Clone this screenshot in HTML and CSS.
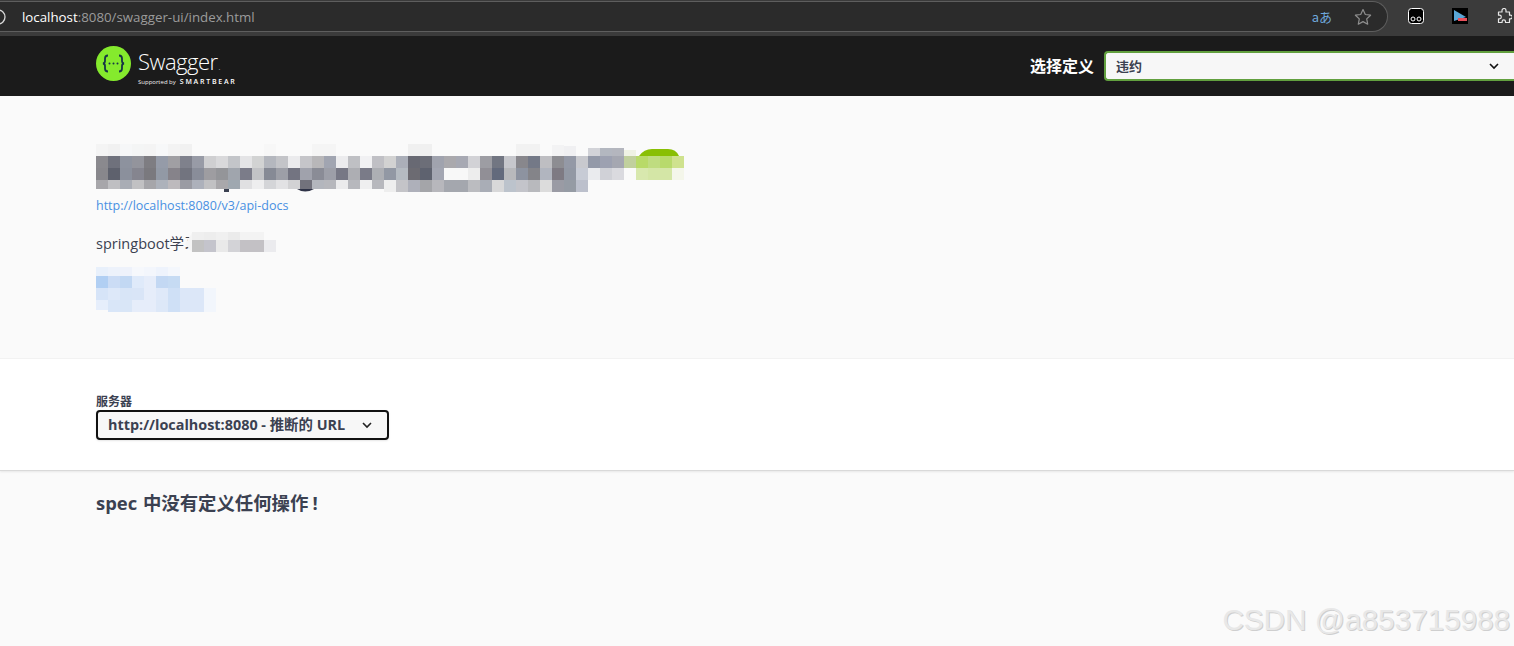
FILE: index.html
```html
<!DOCTYPE html>
<html lang="zh-CN">
<head>
<meta charset="utf-8">
<title>Swagger UI</title>
<link rel="stylesheet" href="styles.css">
</head>
<body>
<div class="browser">
  <div class="address">
    <svg class="reload" width="8" height="18" viewBox="0 0 8 18"><circle cx="-1" cy="9" r="7" fill="none" stroke="#d8d8d8" stroke-width="1.3"/></svg>
    <span class="host">localhost</span><span class="path">:8080/swagger-ui/index.html</span>
    <span class="spacer"></span>
    <span class="translate">aあ</span>
    <svg class="star" width="18" height="18" viewBox="0 0 18 18"><path d="M9 1.6l2.3 4.9 5.3.7-3.9 3.7 1 5.3L9 13.6l-4.7 2.6 1-5.3-3.9-3.700 5.3-.7z" fill="none" stroke="#8f8f8f" stroke-width="1.2" stroke-linejoin="round"/></svg>
  </div>
  <div class="exts">
    <svg width="16" height="16" viewBox="0 0 16 16"><rect x=".5" y=".5" width="15" height="15" rx="3" fill="#000" stroke="#fff"/><circle cx="5" cy="11" r="2" fill="#000" stroke="#fff"/><circle cx="11" cy="11" r="2" fill="#000" stroke="#fff"/></svg>
    <svg width="16" height="16" viewBox="0 0 16 16"><rect width="16" height="16" fill="#000"/><path d="M2 2l12 7-12 4z" fill="#5aa6d6"/><rect x="6" y="10" width="9" height="3" fill="#e8505b"/></svg>
    <svg width="16" height="16" viewBox="0 0 16 16"><path d="M6 2.500a2 2 0 0 1 4 0V4h3.500v3.200h1a1.800 1.800 0 0 1 0 3.600h-1V14.500H9.500v-1a1.700 1.700 0 0 0-3.400 0v1H2.500v-3.700h1a1.800 1.800 0 0 0 0-3.600h-1V4H6z" fill="none" stroke="#e6e6e6" stroke-width="1.2" stroke-linejoin="round"/></svg>
  </div>
</div>

<header class="topbar">
  <div class="logo">
    <svg class="logo-mark" width="35" height="35" viewBox="0 0 35 35">
      <circle cx="17.5" cy="17.5" r="17.5" fill="#85ea2d"/>
      <path d="M12 9.5c-2.6 0-3 1.2-3 3v2.6c0 1.3-.7 2.2-2 2.4 1.3.2 2 1.100 2 2.400v2.600c0 1.800.4 3 3 3M23 9.500c2.600 0 3 1.200 3 3v2.600c0 1.300.7 2.200 2 2.400-1.300.2-2 1.100-2 2.400v2.600c0 1.800-.4 3-3 3" fill="none" stroke="#173646" stroke-width="1.800"/>
      <circle cx="13.500" cy="17.500" r="1" fill="#173646"/><circle cx="17.500" cy="17.500" r="1" fill="#173646"/><circle cx="21.500" cy="17.500" r="1" fill="#173646"/>
    </svg>
    <div class="logo-text">
      <div class="logo-name">Swagger<span class="tm">.</span></div>
      <div class="logo-sub"><span class="by">Supported by</span><span class="bear">SMARTBEAR</span></div>
    </div>
  </div>
  <div class="definition">
    <label class="def-label">选择定义</label>
    <div class="def-select"><span class="def-value">违约</span>
      <svg class="chev" width="10" height="7" viewBox="0 0 10 7"><path d="M1 1l4 4 4-4" fill="none" stroke="#111" stroke-width="1.600"/></svg>
    </div>
  </div>
</header>

<section class="info">
  <svg class="mosaic-title" width="588" height="48" viewBox="0 0 588 48" shape-rendering="crispEdges">
    <g><rect x="0" y="0" width="12" height="12" fill="#f4f4f4"/><rect x="12" y="0" width="12" height="12" fill="#f1f1f1"/><rect x="24" y="0" width="12" height="12" fill="#f6f7f8"/><rect x="36" y="0" width="12" height="12" fill="#f4f5f5"/><rect x="48" y="0" width="12" height="12" fill="#f4f4f4"/><rect x="60" y="0" width="12" height="12" fill="#f7f8f9"/><rect x="72" y="0" width="12" height="12" fill="#f3f3f3"/><rect x="84" y="0" width="12" height="12" fill="#f1f1f1"/><rect x="168" y="0" width="12" height="12" fill="#f7f7f7"/><rect x="216" y="0" width="24" height="12" fill="#f5f5f5"/><rect x="312" y="0" width="24" height="12" fill="#f0f0f0"/><rect x="420" y="0" width="24" height="12" fill="#f2f2f2"/><rect x="456" y="1" width="12" height="11" fill="#f3f3f4"/><rect x="468" y="2" width="12" height="10" fill="#f0f0f2"/><rect x="492" y="4" width="12" height="8" fill="#d2d3d8"/><rect x="504" y="4" width="12" height="8" fill="#b3b7c0"/><rect x="516" y="4" width="12" height="8" fill="#b4b6be"/><rect x="528" y="6" width="12" height="6" fill="#eff2e4"/></g>
    <g><rect x="0" y="12" width="12" height="12" fill="#8a898e"/><rect x="12" y="12" width="12" height="12" fill="#6f717c"/><rect x="24" y="12" width="12" height="12" fill="#8d929e"/><rect x="36" y="12" width="12" height="12" fill="#93949c"/><rect x="48" y="12" width="12" height="12" fill="#7e7d82"/><rect x="60" y="12" width="12" height="12" fill="#959ba8"/><rect x="72" y="12" width="12" height="12" fill="#a09fa3"/><rect x="84" y="12" width="12" height="12" fill="#7f818c"/><rect x="96" y="12" width="12" height="12" fill="#989ba6"/><rect x="108" y="12" width="12" height="12" fill="#cfcfd1"/><rect x="120" y="12" width="12" height="12" fill="#d9d9db"/><rect x="132" y="12" width="12" height="12" fill="#c3c5c9"/><rect x="144" y="12" width="12" height="12" fill="#e4e4e6"/><rect x="156" y="12" width="12" height="12" fill="#d2d3d3"/><rect x="168" y="12" width="12" height="12" fill="#b4b7be"/><rect x="180" y="12" width="12" height="12" fill="#c3c4c8"/><rect x="192" y="12" width="12" height="12" fill="#ebebed"/><rect x="204" y="12" width="12" height="12" fill="#c5c5c9"/><rect x="216" y="12" width="12" height="12" fill="#b8b7b9"/><rect x="228" y="12" width="12" height="12" fill="#a1a5b1"/><rect x="240" y="12" width="12" height="12" fill="#ececee"/><rect x="252" y="12" width="12" height="12" fill="#bfc0c4"/><rect x="264" y="12" width="12" height="12" fill="#f1f1f3"/><rect x="276" y="12" width="12" height="12" fill="#c0c0c5"/><rect x="288" y="12" width="12" height="12" fill="#d2d2d2"/><rect x="300" y="12" width="12" height="12" fill="#abafb9"/><rect x="312" y="12" width="12" height="12" fill="#686973"/><rect x="324" y="12" width="12" height="12" fill="#6c6e78"/><rect x="336" y="12" width="12" height="12" fill="#a0a3ae"/><rect x="348" y="12" width="12" height="12" fill="#aaa9ad"/><rect x="360" y="12" width="12" height="12" fill="#a7a9b3"/><rect x="372" y="12" width="12" height="12" fill="#d2d2d6"/><rect x="384" y="12" width="12" height="12" fill="#9d9da3"/><rect x="396" y="12" width="12" height="12" fill="#727682"/><rect x="408" y="12" width="12" height="12" fill="#c6c7cc"/><rect x="420" y="12" width="12" height="12" fill="#88878c"/><rect x="432" y="12" width="12" height="12" fill="#747987"/><rect x="444" y="12" width="12" height="12" fill="#bebec2"/><rect x="456" y="12" width="12" height="12" fill="#8d8d92"/><rect x="468" y="12" width="12" height="12" fill="#9499a6"/><rect x="480" y="12" width="12" height="12" fill="#c8c9ce"/><rect x="492" y="12" width="12" height="12" fill="#9399a8"/><rect x="504" y="12" width="12" height="12" fill="#9da1b1"/><rect x="516" y="12" width="12" height="12" fill="#a5a7b1"/><rect x="528" y="12" width="12" height="12" fill="#c1d09e"/><rect x="540" y="12" width="12" height="12" fill="#b8da68"/><rect x="552" y="12" width="12" height="12" fill="#bfdc80"/><rect x="564" y="12" width="12" height="12" fill="#b8da6c"/><rect x="576" y="12" width="12" height="12" fill="#cfe28e"/></g>
    <g><rect x="0" y="24" width="12" height="12" fill="#88878c"/><rect x="12" y="24" width="12" height="12" fill="#5e616d"/><rect x="24" y="24" width="12" height="12" fill="#8b909c"/><rect x="36" y="24" width="12" height="12" fill="#85858f"/><rect x="48" y="24" width="12" height="12" fill="#7a797e"/><rect x="60" y="24" width="12" height="12" fill="#9299a5"/><rect x="72" y="24" width="12" height="12" fill="#86838a"/><rect x="84" y="24" width="12" height="12" fill="#72747f"/><rect x="96" y="24" width="12" height="12" fill="#898d99"/><rect x="108" y="24" width="12" height="12" fill="#9e9da1"/><rect x="120" y="24" width="12" height="12" fill="#949599"/><rect x="132" y="24" width="12" height="12" fill="#a0a5ad"/><rect x="144" y="24" width="12" height="12" fill="#7b7c89"/><rect x="156" y="24" width="12" height="12" fill="#c2c3c6"/><rect x="168" y="24" width="12" height="12" fill="#868a95"/><rect x="180" y="24" width="12" height="12" fill="#9d9fa7"/><rect x="192" y="24" width="12" height="12" fill="#737481"/><rect x="204" y="24" width="12" height="12" fill="#a0a2ac"/><rect x="216" y="24" width="12" height="12" fill="#8a8c96"/><rect x="228" y="24" width="12" height="12" fill="#9d9fa8"/><rect x="240" y="24" width="12" height="12" fill="#777885"/><rect x="252" y="24" width="12" height="12" fill="#adaeb3"/><rect x="264" y="24" width="12" height="12" fill="#7a7b88"/><rect x="276" y="24" width="12" height="12" fill="#adafb4"/><rect x="288" y="24" width="12" height="12" fill="#9298a4"/><rect x="300" y="24" width="12" height="12" fill="#b5bbc2"/><rect x="312" y="24" width="12" height="12" fill="#6c6b72"/><rect x="324" y="24" width="12" height="12" fill="#5e626f"/><rect x="336" y="24" width="12" height="12" fill="#a3a6b2"/><rect x="348" y="24" width="24" height="12" fill="#f8f8f8"/><rect x="372" y="24" width="12" height="12" fill="#ededed"/><rect x="384" y="24" width="12" height="12" fill="#918f96"/><rect x="396" y="24" width="12" height="12" fill="#636a7c"/><rect x="408" y="24" width="12" height="12" fill="#b8b9bc"/><rect x="420" y="24" width="12" height="12" fill="#8d93a0"/><rect x="432" y="24" width="12" height="12" fill="#848489"/><rect x="444" y="24" width="12" height="12" fill="#b1b5bf"/><rect x="456" y="24" width="12" height="12" fill="#7e7a83"/><rect x="468" y="24" width="12" height="12" fill="#9298a4"/><rect x="480" y="24" width="12" height="12" fill="#c7cbd5"/><rect x="492" y="24" width="12" height="12" fill="#eaebee"/><rect x="504" y="24" width="12" height="12" fill="#d0d1d7"/><rect x="516" y="24" width="12" height="12" fill="#dadadf"/><rect x="540" y="24" width="12" height="12" fill="#d8e8ae"/><rect x="552" y="24" width="24" height="12" fill="#d4e6a6"/><rect x="576" y="24" width="12" height="12" fill="#f4f6ea"/></g>
    <g><rect x="0" y="36" width="12" height="9" fill="#a7a6aa"/><rect x="12" y="36" width="12" height="9" fill="#bfbfc2"/><rect x="24" y="36" width="12" height="9" fill="#a9adb5"/><rect x="36" y="36" width="12" height="9" fill="#c1c1c3"/><rect x="48" y="36" width="12" height="9" fill="#a6a6aa"/><rect x="60" y="36" width="12" height="9" fill="#adb2bb"/><rect x="72" y="36" width="12" height="9" fill="#bdbabd"/><rect x="84" y="36" width="12" height="9" fill="#9a9ba3"/><rect x="96" y="36" width="12" height="9" fill="#adb1bb"/><rect x="108" y="36" width="12" height="9" fill="#c1c1c3"/><rect x="120" y="36" width="12" height="9" fill="#a9a8ab"/><rect x="132" y="36" width="12" height="9" fill="#9fa8b0"/><rect x="144" y="36" width="12" height="9" fill="#e0e0e2"/><rect x="156" y="36" width="12" height="9" fill="#eeeeef"/><rect x="168" y="36" width="12" height="9" fill="#d4d5d8"/><rect x="180" y="36" width="12" height="9" fill="#e2e2e4"/><rect x="192" y="36" width="12" height="9" fill="#d2d2d4"/><rect x="204" y="36" width="12" height="9" fill="#72727c"/><rect x="216" y="36" width="12" height="9" fill="#b3b6bd"/><rect x="228" y="36" width="12" height="9" fill="#b6b7bc"/><rect x="240" y="36" width="12" height="9" fill="#ebebec"/><rect x="252" y="36" width="12" height="9" fill="#b7b8bd"/><rect x="264" y="36" width="12" height="9" fill="#efeff0"/><rect x="276" y="36" width="12" height="9" fill="#b7b8bd"/><rect x="288" y="36" width="12" height="12" fill="#eeeeee"/><rect x="300" y="36" width="12" height="12" fill="#c4c4c8"/><rect x="312" y="36" width="12" height="12" fill="#aeb0ba"/><rect x="324" y="36" width="12" height="12" fill="#a4a5a9"/><rect x="336" y="36" width="12" height="12" fill="#b7b7bc"/><rect x="348" y="36" width="24" height="12" fill="#a4a7ae"/><rect x="372" y="36" width="12" height="12" fill="#bbbcc0"/><rect x="384" y="36" width="12" height="12" fill="#a9adb6"/><rect x="396" y="36" width="12" height="12" fill="#d8d8d9"/><rect x="408" y="36" width="12" height="12" fill="#bcc3cc"/><rect x="420" y="36" width="12" height="12" fill="#c3c4ca"/><rect x="432" y="36" width="12" height="12" fill="#b8b9bd"/><rect x="444" y="36" width="12" height="12" fill="#dcdcdc"/><rect x="456" y="36" width="12" height="12" fill="#9a9ba4"/><rect x="468" y="36" width="12" height="12" fill="#959ba4"/><rect x="480" y="36" width="12" height="12" fill="#bcc0cc"/></g>
    <path d="M543 12Q548 5 556 5L572 5Q580 5 583 12Z" fill="#89bf04" shape-rendering="auto"/>
    <rect x="128" y="45" width="5" height="3" fill="#3b4151"/>
    <path d="M201 45Q209 50 218 45Z" fill="#2f3347" shape-rendering="auto"/>
  </svg>
  <a class="spec-link" href="#">http://localhost:8080/v3/api-docs</a>
  <p class="desc">springboot学习
    <svg class="mosaic-desc" width="92" height="20" viewBox="0 0 92 20" shape-rendering="crispEdges">
      <path d="M0 12L7 1V20Z" fill="#f5f5f5" shape-rendering="auto"/>
      <rect x="7" y="0" width="12" height="8" fill="#efefef"/><rect x="19" y="0" width="12" height="8" fill="#ededed"/><rect x="31" y="0" width="12" height="8" fill="#f0f0f0"/><rect x="43" y="0" width="12" height="8" fill="#ebebeb"/><rect x="55" y="0" width="24" height="8" fill="#f3f3f3"/>
      <rect x="7" y="8" width="12" height="12" fill="#c2c2c2"/><rect x="19" y="8" width="12" height="12" fill="#c4c4cc"/><rect x="31" y="8" width="12" height="12" fill="#e9e9e9"/><rect x="43" y="8" width="12" height="12" fill="#d3d3d7"/><rect x="55" y="8" width="24" height="12" fill="#c3c1c5"/><rect x="79" y="8" width="12" height="12" fill="#ebebee"/>
    </svg>
  </p>
  <svg class="mosaic-contact" width="120" height="45" viewBox="0 0 120 45" shape-rendering="crispEdges">
    <rect x="0" y="0" width="12" height="9" fill="#e8f0fb"/><rect x="12" y="0" width="12" height="9" fill="#edf2fb"/><rect x="24" y="0" width="12" height="9" fill="#eef2fb"/><rect x="36" y="0" width="12" height="9" fill="#f6f8fc"/><rect x="48" y="0" width="12" height="9" fill="#f3f6fc"/><rect x="60" y="0" width="12" height="9" fill="#eef3fc"/><rect x="72" y="0" width="12" height="9" fill="#f4f7fc"/>
    <rect x="0" y="9" width="12" height="12" fill="#b1cff3"/><rect x="12" y="9" width="12" height="12" fill="#cbdcf5"/><rect x="24" y="9" width="12" height="12" fill="#c2d8f3"/><rect x="36" y="9" width="12" height="12" fill="#dfeafa"/><rect x="48" y="9" width="12" height="12" fill="#e6edfa"/><rect x="60" y="9" width="12" height="12" fill="#c3d8f3"/><rect x="72" y="9" width="12" height="12" fill="#c6dbf3"/>
    <rect x="0" y="21" width="12" height="12" fill="#d6e4f8"/><rect x="12" y="21" width="12" height="12" fill="#dde8f9"/><rect x="24" y="21" width="12" height="12" fill="#d8e5f7"/><rect x="36" y="21" width="12" height="12" fill="#d9e5f7"/><rect x="48" y="21" width="12" height="12" fill="#e6edfa"/><rect x="60" y="21" width="12" height="12" fill="#dfe9f9"/><rect x="72" y="21" width="12" height="12" fill="#cfe0f6"/><rect x="84" y="21" width="24" height="12" fill="#dce7f8"/><rect x="108" y="21" width="12" height="12" fill="#f2f6fc"/>
    <rect x="0" y="33" width="12" height="10" fill="#e6eefb"/><rect x="12" y="33" width="12" height="12" fill="#d9e6f8"/><rect x="24" y="33" width="12" height="12" fill="#d9e6f7"/><rect x="36" y="33" width="24" height="12" fill="#e6edfa"/><rect x="60" y="33" width="12" height="12" fill="#dde8f8"/><rect x="72" y="33" width="12" height="12" fill="#cfe0f6"/><rect x="84" y="33" width="24" height="12" fill="#dce7f8"/><rect x="108" y="33" width="12" height="12" fill="#f2f6fc"/>
  </svg>
</section>

<section class="servers">
  <div class="servers-title">服务器</div>
  <div class="server-select"><span class="server-value">http://localhost:8080 - 推断的 URL</span>
    <svg class="chev" width="10" height="7" viewBox="0 0 10 7"><path d="M1 1l4 4 4-4" fill="none" stroke="#222" stroke-width="1.600"/></svg>
  </div>
</section>

<main class="ops">
  <h3 class="empty">spec 中没有定义任何操作<span class="bang">!</span></h3>
</main>

<div class="watermark">CSDN @a853715988</div>
</body>
</html>
```
FILE: styles.css
```css
html, body { margin: 0; padding: 0; height: 100%; overflow: hidden; }
body { position: relative; background: #fafafa; color: #3b4151; font-family: "Open Sans", "Noto Sans CJK SC", sans-serif; }

.browser { height: 36px; background: #3b3b3b; display: flex; align-items: flex-start; box-sizing: border-box; padding-top: 1px; }
.address { flex: 0 0 1389px; margin-left: -1px; height: 31px; box-sizing: border-box; background: #2b2b2b; border: 1px solid #5e5e5e; border-left: 0; border-radius: 0 16px 16px 0; display: flex; align-items: center; font-size: 13.300px; padding-right: 15px; }
.reload { margin-right: 15px; flex: none; }
.host { color: #fff; }
.path { color: #9b9b9b; }
.spacer { flex: 1; }
.translate { color: #6fa8dc; font-size: 13px; margin-right: 22px; font-family: "Noto Sans CJK JP", sans-serif; }
.star { flex: none; }
.exts { flex: 1; display: flex; gap: 28px; padding: 7px 0 0 20px; }
.exts svg { flex: none; }

.topbar { height: 60px; background: #1b1b1b; display: flex; justify-content: space-between; align-items: center; padding-left: 96px; }
.logo { display: flex; gap: 7px; height: 40px; }
.logo-mark { flex: none; }
.logo-name { color: #fff; font-size: 22px; font-weight: 300; height: 30px; line-height: 30px; letter-spacing: -.5px; }
.tm { font-size: 8px; line-height: 0; margin-left: 1px; }
.logo-sub { display: flex; align-items: baseline; gap: 4px; color: #f0f0f0; height: 8px; line-height: 8px; margin-top: 2px; }
.by { font-size: 6px; }
.bear { font-size: 7px; font-weight: 600; letter-spacing: 1.750px; color: #fff; }
.definition { display: flex; align-items: center; gap: 10px; }
.def-label { color: #fff; font-size: 16px; font-weight: 700; line-height: 20px; padding-bottom: 1px; }
.def-select { width: 410px; height: 30px; box-sizing: border-box; border: 2px solid #62a03f; border-right: 0; border-radius: 4px 0 0 4px; background: #f7f7f7; display: flex; justify-content: space-between; align-items: center; padding: 0 15px 0 10px; font-size: 13px; font-weight: 600; color: #3b4151; }
.def-value { padding-bottom: 2px; }

.info { height: 263px; box-sizing: border-box; padding: 48px 0 0 96px; border-bottom: 1px solid #f3f3f3; }
.mosaic-title, .mosaic-contact { display: block; }
.spec-link { display: block; margin-top: 5px; font-size: 12.500px; line-height: 18px; color: #4990e2; text-decoration: none; }
.desc { position: relative; margin: 19px 0 0; font-size: 14.500px; line-height: 20px; }
.mosaic-desc { position: absolute; left: 89px; top: -2px; }
.mosaic-contact { margin-top: 13px; }

.servers { height: 112px; box-sizing: border-box; background: #fff; padding: 35px 0 0 96px; border-bottom: 1px solid #d9d9d9; box-shadow: 0 1px 2px rgba(0,0,0,.08); }
.servers-title { font-size: 12px; font-weight: 700; line-height: 15px; margin-bottom: 1px; }
.server-select { width: 293px; height: 30px; box-sizing: border-box; border: 2px solid #111; border-radius: 4px; background: #f7f7f7; display: flex; justify-content: space-between; align-items: center; padding: 0 15px 0 10px; font-size: 14.400px; font-weight: 700; box-shadow: 0 1px 2px rgba(0,0,0,.1); }
.server-value { padding-bottom: 3px; }

.ops { padding: 19px 0 0 96px; }
.empty { margin: 0; font-size: 18.400px; font-weight: 700; line-height: 26px; word-spacing: 1px; }
.bang { margin-left: 4px; }

.watermark { position: absolute; right: 4px; top: 603px; font-family: "Liberation Sans", sans-serif; font-size: 29.700px; line-height: 34px; color: #e8e8e8; text-shadow: 1px 1px 0 #cfcfcf; white-space: nowrap; }
```
